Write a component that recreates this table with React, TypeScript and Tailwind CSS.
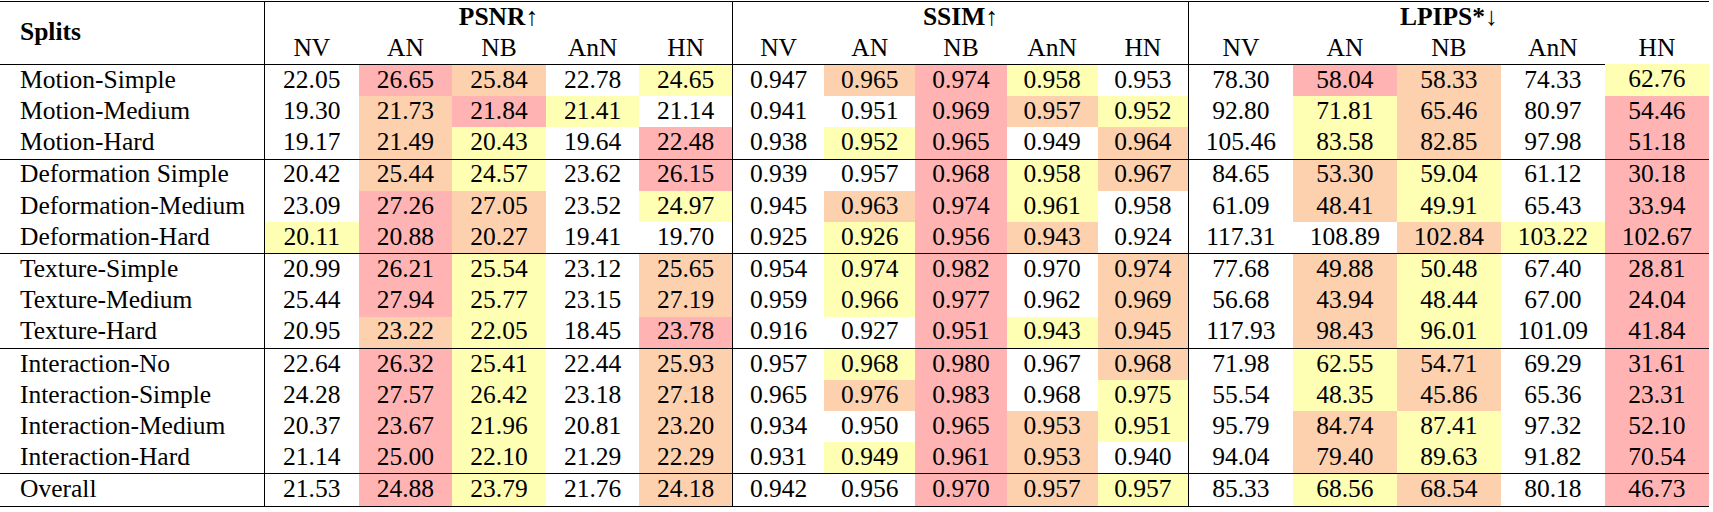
const COLS =
  "grid grid-cols-[265px_repeat(5,93.6px)_repeat(5,91.2px)_repeat(5,104px)]";

const BG: Record<string, string> = {
  R: "bg-[#ffb3b3]",
  O: "bg-[#fdd0ae]",
  Y: "bg-[#ffffb3]",
  W: "",
};

type Row = [string, string[], string];

const groups: Row[][] = [
  [
    ["Motion-Simple", ["22.05", "26.65", "25.84", "22.78", "24.65", "0.947", "0.965", "0.974", "0.958", "0.953", "78.30", "58.04", "58.33", "74.33", "62.76"], "WROWY WORYW WROWY"],
    ["Motion-Medium", ["19.30", "21.73", "21.84", "21.41", "21.14", "0.941", "0.951", "0.969", "0.957", "0.952", "92.80", "71.81", "65.46", "80.97", "54.46"], "WORYW WWROY WYOWR"],
    ["Motion-Hard", ["19.17", "21.49", "20.43", "19.64", "22.48", "0.938", "0.952", "0.965", "0.949", "0.964", "105.46", "83.58", "82.85", "97.98", "51.18"], "WOYWR WYRWO WYOWR"],
  ],
  [
    ["Deformation Simple", ["20.42", "25.44", "24.57", "23.62", "26.15", "0.939", "0.957", "0.968", "0.958", "0.967", "84.65", "53.30", "59.04", "61.12", "30.18"], "WOYWR WWRYO WOYWR"],
    ["Deformation-Medium", ["23.09", "27.26", "27.05", "23.52", "24.97", "0.945", "0.963", "0.974", "0.961", "0.958", "61.09", "48.41", "49.91", "65.43", "33.94"], "WROWY WORYW WOYWR"],
    ["Deformation-Hard", ["20.11", "20.88", "20.27", "19.41", "19.70", "0.925", "0.926", "0.956", "0.943", "0.924", "117.31", "108.89", "102.84", "103.22", "102.67"], "YROWW WYROW WWOYR"],
  ],
  [
    ["Texture-Simple", ["20.99", "26.21", "25.54", "23.12", "25.65", "0.954", "0.974", "0.982", "0.970", "0.974", "77.68", "49.88", "50.48", "67.40", "28.81"], "WRYWO WYRWO WOYWR"],
    ["Texture-Medium", ["25.44", "27.94", "25.77", "23.15", "27.19", "0.959", "0.966", "0.977", "0.962", "0.969", "56.68", "43.94", "48.44", "67.00", "24.04"], "WRYWO WYRWO WOYWR"],
    ["Texture-Hard", ["20.95", "23.22", "22.05", "18.45", "23.78", "0.916", "0.927", "0.951", "0.943", "0.945", "117.93", "98.43", "96.01", "101.09", "41.84"], "WOYWR WWRYO WOYWR"],
  ],
  [
    ["Interaction-No", ["22.64", "26.32", "25.41", "22.44", "25.93", "0.957", "0.968", "0.980", "0.967", "0.968", "71.98", "62.55", "54.71", "69.29", "31.61"], "WRYWO WYRWO WYOWR"],
    ["Interaction-Simple", ["24.28", "27.57", "26.42", "23.18", "27.18", "0.965", "0.976", "0.983", "0.968", "0.975", "55.54", "48.35", "45.86", "65.36", "23.31"], "WRYWO WORWY WYOWR"],
    ["Interaction-Medium", ["20.37", "23.67", "21.96", "20.81", "23.20", "0.934", "0.950", "0.965", "0.953", "0.951", "95.79", "84.74", "87.41", "97.32", "52.10"], "WRYWO WWROY WOYWR"],
    ["Interaction-Hard", ["21.14", "25.00", "22.10", "21.29", "22.29", "0.931", "0.949", "0.961", "0.953", "0.940", "94.04", "79.40", "89.63", "91.82", "70.54"], "WRYWO WYROW WOYWR"],
  ],
  [
    ["Overall", ["21.53", "24.88", "23.79", "21.76", "24.18", "0.942", "0.956", "0.970", "0.957", "0.957", "85.33", "68.56", "68.54", "80.18", "46.73"], "WRYWO WWROY WYOWR"],
  ],
];

const subCols = ["NV", "AN", "NB", "AnN", "HN"];

function DataRow({ row, first }: { row: Row; first?: boolean }) {
  const [name, values, colors] = row;
  const codes = colors.replace(/ /g, "");
  return (
    <div className={`${COLS} h-[31.2px]`}>
      <div className="flex items-center pl-5 pb-[2px] border-r border-black">{name}</div>
      {values.map((v, i) => (
        <div
          key={i}
          className={`flex items-center justify-center pb-[2px] ${BG[codes[i]]} ${
            i === 4 || i === 9 ? "border-r border-black" : ""
          } ${first && i === 14 ? "-mt-px" : ""}`}
        >
          {v}
        </div>
      ))}
    </div>
  );
}

export default function App() {
  return (
    <div className="w-[1713px] h-[512px] bg-white pt-px font-[family-name:Liberation_Serif,serif] text-[25.5px] leading-none text-black">
      <div className="w-[1709px] border-t border-b border-black">
        {/* Header */}
        <div className={`${COLS} grid-rows-[31px_31px] border-b border-black`}>
          <div className="row-span-2 flex items-center pl-5 pb-[2px] font-bold border-r border-black">
            Splits
          </div>
          <div className="col-span-5 flex items-center justify-center pb-[2px] border-r border-black">
            <span className="font-bold">PSNR</span>↑
          </div>
          <div className="col-span-5 flex items-center justify-center pb-[2px] border-r border-black">
            <span className="font-bold">SSIM</span>↑
          </div>
          <div className="col-span-5 flex items-center justify-center pb-[2px]">
            <span className="font-bold">LPIPS*</span>↓
          </div>
          {[0, 1, 2].map((g) =>
            subCols.map((c, i) => (
              <div
                key={`${g}-${c}`}
                className={`flex items-center justify-center pb-[2px] ${
                  i === 4 && g < 2 ? "border-r border-black" : ""
                }`}
              >
                {c}
              </div>
            ))
          )}
        </div>

        {/* Body */}
        {groups.map((rows, gi) => (
          <div key={gi} className={gi > 0 ? "border-t border-black" : ""}>
            {rows.map((r, ri) => (
              <DataRow key={r[0]} row={r} first={gi === 0 && ri === 0} />
            ))}
          </div>
        ))}
      </div>
    </div>
  );
}
